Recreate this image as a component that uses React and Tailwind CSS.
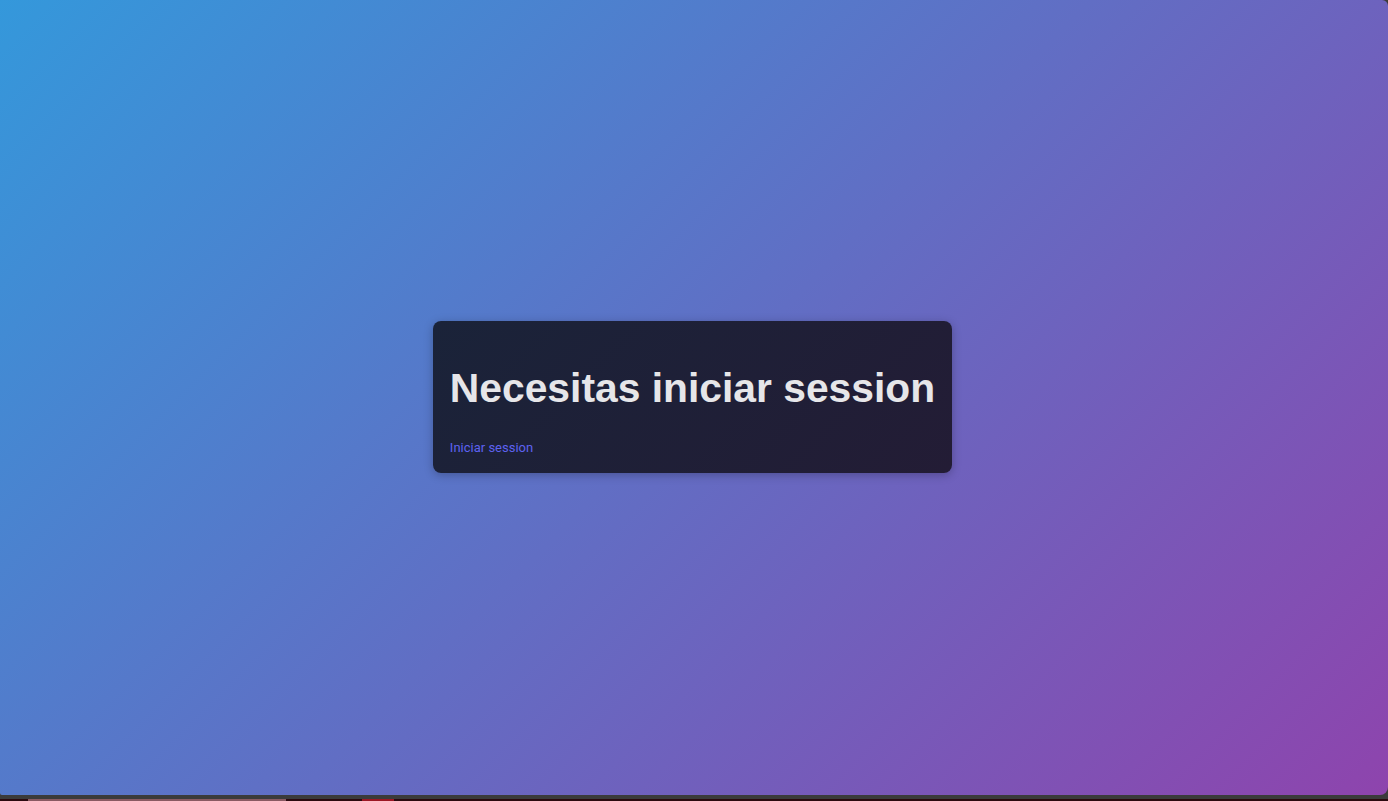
export default function App() {
  return (
    <div className="w-[1388px] h-[801px] bg-[#3b3b3b] flex flex-col overflow-hidden" style={{ fontFamily: '"Liberation Sans", Arial, sans-serif' }}>
      <main className="h-[795px] shrink-0 rounded-tr-[6px] rounded-br-[8px] rounded-bl-[2px] bg-[linear-gradient(135deg,#3498db,#8e44ad)] flex items-center justify-center">
        <div className="rounded-lg bg-[linear-gradient(135deg,#1a2339,#231c35)] shadow-[0_2px_10px_rgba(0,0,0,0.25)] px-[17px] pt-[16px] pb-[17px] ml-[-3px] mt-[-2px]">
          <h1 className="text-[40.8px] font-bold leading-[48px] my-[27px] text-[#e6e6e9]">Necesitas iniciar session</h1>
          <a href="#" className="block text-[13px] leading-[17px] text-[#5d62f0]" style={{ fontFamily: 'Roboto, "Liberation Sans", sans-serif' }}>Iniciar session</a>
        </div>
      </main>
      <div className="h-[4px] shrink-0 bg-[#3b3b3b]"></div>
      <div className="h-[2px] shrink-0 bg-[#2b0a0f] flex">
        <div className="w-[28px]"></div>
        <div className="w-[258px] bg-[#8a5a62]"></div>
        <div className="w-[76px]"></div>
        <div className="w-[32px] bg-[#9c1724]"></div>
      </div>
    </div>
  );
}
